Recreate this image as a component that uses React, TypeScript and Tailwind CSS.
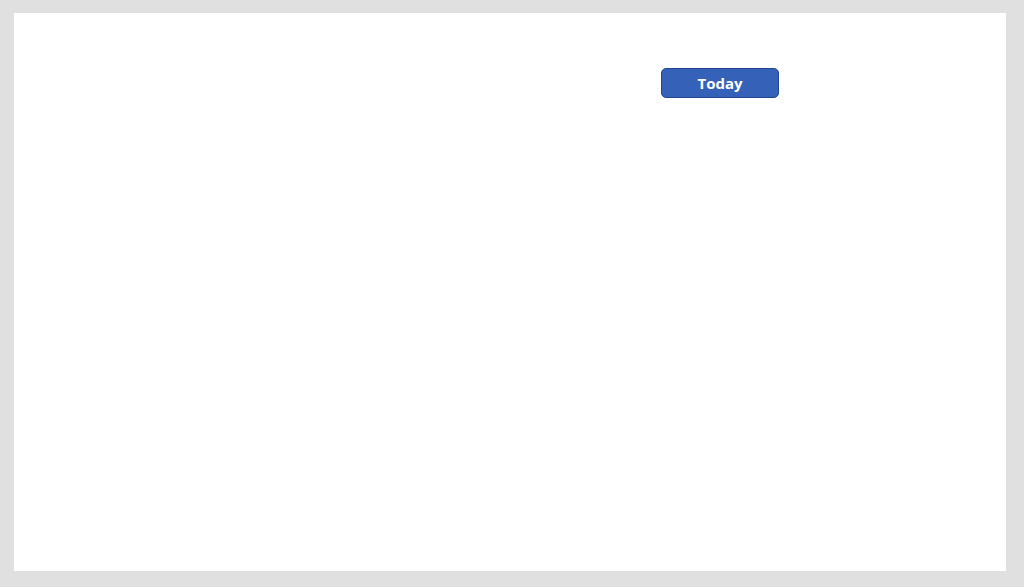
export default function App() {
  return (
    <div className="w-[1024px] h-[587px] bg-[#e0e0e0] pt-[13px] pl-[14px]">
      <div className="w-[992px] h-[558px] bg-white pt-[55px] pl-[647px]">
        <button className="w-[118px] h-[30px] rounded-[5px] bg-[#3561b9] border border-[#24468f] text-white font-bold text-[15px] flex items-center justify-center" style={{ fontFamily: '"Open Sans", "Noto Sans", sans-serif' }}>
          Today
        </button>
      </div>
    </div>
  );
}
